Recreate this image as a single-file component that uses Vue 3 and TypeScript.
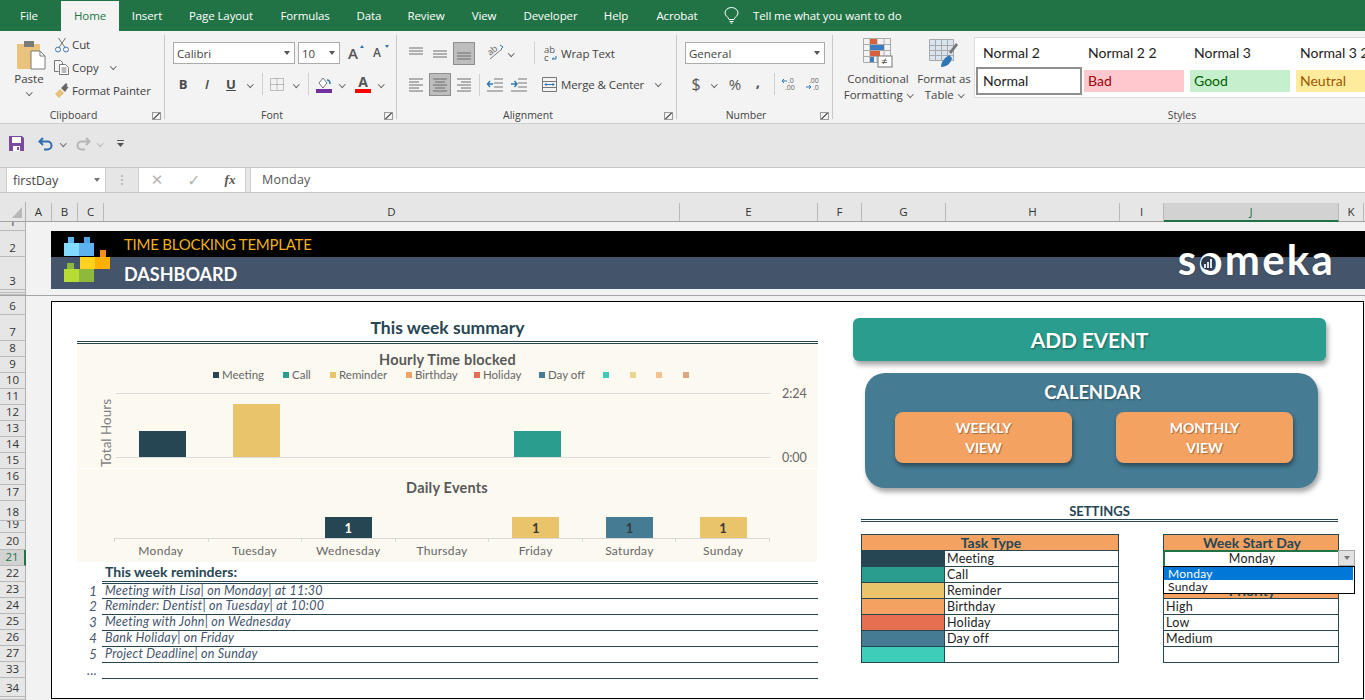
<script setup lang="ts">
interface Row { n: string; h: number; active?: boolean }
interface Bar { day: string; h: number; color: string; label?: string; dark?: boolean }

const tabs: string[] = ['File', 'Home', 'Insert', 'Page Layout', 'Formulas', 'Data', 'Review', 'View', 'Developer', 'Help', 'Acrobat']
const cols: string[] = ['A', 'B', 'C', 'D', 'E', 'F', 'G', 'H', 'I', 'J', 'K']

const frozenRows: Row[] = [
  { n: '1', h: 9 }, { n: '2', h: 26 }, { n: '3', h: 33 }, { n: '4', h: 3 }, { n: '5', h: 2 }
]
const rows: Row[] = [
  { n: '6', h: 19 }, { n: '7', h: 26 }, { n: '8', h: 16 }, { n: '9', h: 16 }, { n: '10', h: 16 },
  { n: '11', h: 16 }, { n: '12', h: 16 }, { n: '13', h: 16 }, { n: '14', h: 16 }, { n: '15', h: 16 },
  { n: '16', h: 16 }, { n: '17', h: 16 }, { n: '18', h: 20 }, { n: '19', h: 12 }, { n: '20', h: 17 },
  { n: '21', h: 16, active: true }, { n: '22', h: 16 }, { n: '23', h: 16 }, { n: '24', h: 16 },
  { n: '25', h: 16 }, { n: '26', h: 16 }, { n: '27', h: 16 }, { n: '33', h: 16 }, { n: '34', h: 19 }, { n: '35', h: 3 }
]

const navy = '#264653'
const green = '#2a9d8f'
const gold = '#e9c46a'
const orange = '#f4a261'
const red = '#e76f51'
const steel = '#457b93'
const mint = '#3ecdb9'

const legend = [
  { name: 'Meeting', color: navy }, { name: 'Call', color: green }, { name: 'Reminder', color: gold },
  { name: 'Birthday', color: orange }, { name: 'Holiday', color: red }, { name: 'Day off', color: steel },
  { name: '', color: mint }, { name: '', color: '#eed58f' }, { name: '', color: '#f6c08f' }, { name: '', color: '#dfa67f' }
]

const hourly: Bar[] = [
  { day: 'Monday', h: 26, color: navy }, { day: 'Tuesday', h: 53, color: gold }, { day: 'Wednesday', h: 0, color: navy },
  { day: 'Thursday', h: 0, color: navy }, { day: 'Friday', h: 26, color: green }, { day: 'Saturday', h: 0, color: navy },
  { day: 'Sunday', h: 0, color: navy }
]
const daily: Bar[] = [
  { day: 'Monday', h: 0, color: navy }, { day: 'Tuesday', h: 0, color: navy },
  { day: 'Wednesday', h: 21, color: navy, label: '1' }, { day: 'Thursday', h: 0, color: navy },
  { day: 'Friday', h: 21, color: gold, label: '1', dark: true }, { day: 'Saturday', h: 21, color: steel, label: '1', dark: true },
  { day: 'Sunday', h: 21, color: gold, label: '1', dark: true }
]
const reminders = [
  { n: '1', t: 'Meeting with Lisa| on Monday| at 11:30' },
  { n: '2', t: 'Reminder: Dentist| on Tuesday| at 10:00' },
  { n: '3', t: 'Meeting with John| on Wednesday' },
  { n: '4', t: 'Bank Holiday| on Friday' },
  { n: '5', t: 'Project Deadline| on Sunday' },
  { n: '...', t: '' }
]
const taskTypes = [
  { c: navy, t: 'Meeting' }, { c: green, t: 'Call' }, { c: gold, t: 'Reminder' }, { c: orange, t: 'Birthday' },
  { c: red, t: 'Holiday' }, { c: steel, t: 'Day off' }, { c: mint, t: '' }
]
const priorities: string[] = ['High', 'Low', 'Medium', '']

const p: Record<string, string> = {
  top: 'M0 2h14M0 5h14M0 8h14',
  mid: 'M0 4h14M0 7h14M0 10h14',
  bot: 'M0 7h14M0 10h14M0 13h14',
  left: 'M0 1h14M0 4h10M0 7h14M0 10h10M0 13h14',
  center: 'M0 1h14M2 4h10M0 7h14M2 10h10M0 13h14',
  right: 'M0 1h14M4 4h10M0 7h14M4 10h10M0 13h14'
}
</script>

<template>
  <div class="app">
    <nav class="tabs">
      <span v-for="t in tabs" :key="t" class="tab" :class="{ home: t === 'Home' }">{{ t }}</span>
      <span class="bulb">
        <svg width="15" height="17" viewBox="0 0 15 17"><path d="M5 12.500C4.500 10 1 9 1 6a6.500 5.500 0 0 1 13 0c0 3-3.500 4-4 6.500zM5.500 14.500h4M6.500 16h2" fill="none" stroke="#fff" /></svg>
      </span>
      <span class="tell">Tell me what you want to do</span>
    </nav>

    <section class="ribbon">
      <div class="group g-clip">
        <div class="body clip">
          <div class="paste">
            <svg width="30" height="30" viewBox="0 0 30 30">
              <rect x="1" y="4" width="23" height="25" rx="1" fill="#e9c27e" />
              <rect x="8" y="1" width="10" height="6" fill="#7a7a7a" />
              <path d="M15 11h9l5 5v13H15z" fill="#fff" stroke="#7b7b7b" />
              <path d="M24 11v5h5" fill="none" stroke="#7b7b7b" />
            </svg>
            <span class="paste-t">Paste</span>
            <i class="chev"></i>
          </div>
          <div class="clip-rows">
            <div class="clip-row">
              <svg width="16" height="16" viewBox="0 0 16 16"><path d="M5 10.500 11.500 1M11 10.500 4.500 1" stroke="#777" fill="none" /><circle cx="4" cy="12.500" r="2.500" fill="none" stroke="#3f78b5" /><circle cx="12" cy="12.500" r="2.500" fill="none" stroke="#3f78b5" /></svg>
              <span>Cut</span>
            </div>
            <div class="clip-row">
              <svg width="16" height="15" viewBox="0 0 16 15"><path d="M.5.500h6l2 2v2M.5.500v11h4" fill="none" stroke="#777" /><path d="M5.500 4.500h6l3 3v7h-9zM7.500 8h5M7.500 10h5M7.500 12h5" fill="#fff" stroke="#777" /></svg>
              <span>Copy</span><i class="chev copy-chev"></i>
            </div>
            <div class="clip-row">
              <svg width="16" height="15" viewBox="0 0 16 15"><path d="M1 11l5-5 4 4-5 5z" fill="#e7c07c" /><path d="M7 5l5-5 1.500 1.500-1 1.500 2 1-3.500 5z" fill="#666" /></svg>
              <span>Format Painter</span>
            </div>
          </div>
        </div>
        <div class="glabel">Clipboard<i class="launch"></i></div>
      </div>

      <div class="group g-font">
        <div class="body two">
          <div class="font-r1">
            <div class="combo font-name">Calibri<i class="caret"></i></div>
            <div class="combo font-size">10<i class="caret"></i></div>
            <span class="grow">A<i class="up"></i></span>
            <span class="grow small">A<i class="dn"></i></span>
          </div>
          <div class="font-r2">
            <b class="fmt">B</b><i class="fmt it">I</i><u class="fmt und">U</u><i class="chev"></i>
            <i class="sep"></i>
            <svg width="14" height="13" viewBox="0 0 14 13"><path d="M.5.500h13v12H.5zM7 .5v12M.5 6.500h13" fill="none" stroke="#888" stroke-dasharray="1 1" /></svg>
            <i class="chev"></i>
            <i class="sep"></i>
            <svg width="16" height="17" viewBox="0 0 16 17"><path d="M3 7l4-5 4 5-4 5z" fill="#fff" stroke="#777" /><path d="M11 4c2 0 3 2 3 4" fill="none" stroke="#2f76b5" stroke-width="1.500" /><rect y="13" width="16" height="4" fill="#7030a0" /></svg>
            <i class="chev"></i>
            <span class="color-a">A</span>
            <i class="chev"></i>
          </div>
        </div>
        <div class="glabel">Font<i class="launch"></i></div>
      </div>

      <div class="group g-align">
        <div class="body align-grid">
          <svg class="ic" viewBox="0 0 14 14"><path :d="p.top" /></svg>
          <svg class="ic low" viewBox="0 0 14 14"><path :d="p.mid" /></svg>
          <span class="toggle"><svg class="ic" viewBox="0 0 14 14"><path :d="p.bot" /></svg></span>
          <i></i>
          <span class="orient">
            <svg width="17" height="16" viewBox="0 0 17 16"><path d="M3 15 15 5" fill="none" stroke="#777" /><text x="1" y="10" font-size="9" fill="#666" font-family="Open Sans" transform="rotate(-40 5 8)">ab</text><path d="M13 1l3 2-2 2" fill="none" stroke="#2f76b5" /></svg>
          </span>
          <i class="chev orient-chev"></i>
          <i class="sep tall"></i>
          <span class="wide-tool">
            <svg class="w-ic" width="14" height="17" viewBox="0 0 14 17"><text x="0" y="8" font-size="9.500" fill="#555" font-family="Open Sans">ab</text><text x="0" y="16" font-size="9.500" fill="#555" font-family="Open Sans">c</text><path d="M12 11v3H8l2-1.500" fill="none" stroke="#2f76b5" /></svg>
            <span>Wrap Text</span>
          </span>

          <svg class="ic" viewBox="0 0 14 14"><path :d="p.left" /></svg>
          <span class="toggle"><svg class="ic" viewBox="0 0 14 14"><path :d="p.center" /></svg></span>
          <svg class="ic" viewBox="0 0 14 14"><path :d="p.right" /></svg>
          <i class="sep"></i>
          <svg width="16" height="14" viewBox="0 0 16 14"><path d="M7 1h9M7 5h9M7 9h9M0 13h16" stroke="#777" fill="none" /><path d="M0 6h6M3 3 .5 6 3 9" stroke="#2f76b5" fill="none" stroke-width="1.400" /></svg>
          <svg width="16" height="14" viewBox="0 0 16 14"><path d="M7 1h9M7 5h9M7 9h9M0 13h16" stroke="#777" fill="none" /><path d="M0 6h6M3.500 3 6 6 3.500 9" stroke="#2f76b5" fill="none" stroke-width="1.400" /></svg>
          <span></span>
          <span class="wide-tool">
            <svg class="w-ic m" width="15" height="15" viewBox="0 0 15 15"><path d="M.5.500h14v14H.5zM.5 4.500h14M.5 10.500h14" fill="none" stroke="#777" /><path d="M3 7.500h9M4.500 6 3 7.500 4.500 9M10.500 6 12 7.500 10.500 9" fill="none" stroke="#2f76b5" /></svg>
            <span>Merge &amp; Center</span><i class="chev merge-chev"></i>
          </span>
        </div>
        <div class="glabel">Alignment<i class="launch"></i></div>
      </div>

      <div class="group g-num">
        <div class="body two">
          <div class="combo num-combo">General<i class="caret"></i></div>
          <div class="num-r2">
            <span class="nsym dollar">$</span><i class="chev"></i>
            <span class="nsym">%</span><span class="nsym comma">,</span>
            <i class="sep"></i>
            <svg width="15" height="14" viewBox="0 0 15 14"><text x="6" y="6" font-size="7" fill="#666" font-family="Open Sans">.0</text><text x="3" y="13" font-size="7" fill="#666" font-family="Open Sans">.00</text><path d="M0 4h5M2 2 0 4l2 2" stroke="#2f76b5" fill="none" /></svg>
            <span></span>
            <svg width="15" height="14" viewBox="0 0 15 14"><text x="3" y="6" font-size="7" fill="#666" font-family="Open Sans">.00</text><text x="7" y="13" font-size="7" fill="#666" font-family="Open Sans">.0</text><path d="M0 10h5M3 8l2 2-2 2" stroke="#2f76b5" fill="none" /></svg>
          </div>
        </div>
        <div class="glabel">Number<i class="launch"></i></div>
      </div>

      <div class="group g-styles">
        <div class="body styles-body">
          <div class="big cf">
            <svg width="30" height="30" viewBox="0 0 30 30">
              <path d="M.5.500h27v24H.5zM.5 6.500h27M.5 12.500h27M.5 18.500h27M7 .5v24M14 .5v24M21 .5v24" fill="none" stroke="#a9a9a9" />
              <rect x="7" y="1" width="7" height="5" fill="#d9603b" /><rect x="7" y="7" width="14" height="5" fill="#3f7cbf" />
              <rect x="7" y="13" width="10" height="5" fill="#d9603b" /><rect x="7" y="19" width="4" height="5" fill="#3f7cbf" />
              <rect x="15" y="18" width="14" height="11" fill="#fff" stroke="#777" />
              <text x="18" y="27" font-size="11" fill="#444" font-family="Open Sans">≠</text>
            </svg>
            <span class="big-t">Conditional</span>
            <span class="big-t">Formatting<i class="chev big-chev"></i></span>
          </div>
          <div class="big">
            <svg width="30" height="30" viewBox="0 0 30 30">
              <path d="M.5 1.500h24v21H.5zM.5 7.500h24M.5 12.500h24M.5 17.500h24M6.500 1.500v21M12.500 1.500v21M18.500 1.500v21" fill="#d9e4f1" stroke="#a9a9a9" />
              <path d="M20 14 27 5l2 2-7 9z" fill="#777" /><path d="M12 29c0-6 4-9 8-12l3 3c-1 5-5 9-11 9z" fill="#2f76b5" />
            </svg>
            <span class="big-t">Format as</span>
            <span class="big-t">Table<i class="chev big-chev"></i></span>
          </div>
          <div class="gallery">
            <span class="g-name">Normal 2</span><span class="g-name">Normal 2 2</span><span class="g-name">Normal 3</span><span class="g-name">Normal 3 2</span>
            <span class="g-cell normal">Normal</span><span class="g-cell bad">Bad</span><span class="g-cell good">Good</span><span class="g-cell neutral">Neutral</span>
          </div>
        </div>
        <div class="glabel styles-label">Styles</div>
      </div>
    </section>

    <div class="qat">
      <svg width="15" height="15" viewBox="0 0 15 15"><path d="M0 0h13l2 2v13H0z" fill="#7a4a9c" /><rect x="3" y="1" width="9" height="6" fill="#fff" /><rect x="4" y="10" width="7" height="5" fill="#fff" /><rect x="8" y="11" width="2" height="3" fill="#7a4a9c" /></svg>
      <svg class="undo" width="15" height="14" viewBox="0 0 15 14"><path d="M5 1 1.500 4.500 5 8M2 4.500h7.500a4 4 0 0 1 0 8H6" fill="none" stroke="#2f6fae" stroke-width="2" /></svg>
      <i class="chev q1"></i>
      <svg class="redo" width="15" height="14" viewBox="0 0 15 14"><path d="M10 1l3.500 3.500L10 8M13 4.500H5.500a4 4 0 0 0 0 8H9" fill="none" stroke="#b5b5b5" stroke-width="2" /></svg>
      <i class="chev q2"></i>
      <svg class="custom" width="7" height="7" viewBox="0 0 7 7"><path d="M0 0h7v1H0zM0 3h7L3.500 7z" fill="#555" /></svg>
    </div>

    <div class="fbar">
      <div class="namebox">firstDay<i class="caret dark"></i></div>
      <i class="dots"></i>
      <div class="fx-box"><span class="fx-x">✕</span><span class="fx-c">✓</span><span class="fx-f">fx</span></div>
      <div class="finput">Monday</div>
    </div>

    <div class="colhead">
      <div class="corner"><i class="tri"></i></div>
      <div v-for="c in cols" :key="c" class="col" :class="{ on: c === 'J' }">{{ c }}</div>
    </div>

    <div class="pane frozen">
      <div class="rowhead">
        <div v-for="r in frozenRows" :key="r.n" class="rh" :style="{ height: r.h + 'px' }">{{ r.n }}</div>
      </div>
      <header class="band">
        <div class="band-top">TIME BLOCKING TEMPLATE</div>
        <div class="band-bot">DASHBOARD</div>
        <svg class="logo" width="46" height="45" viewBox="0 0 46 45">
          <rect x="4" y="0" width="6" height="6" fill="#5cb8f0" /><rect x="20" y="0" width="6" height="6" fill="#4ea5e6" />
          <rect x="0" y="6" width="15" height="13" fill="#83dcff" /><rect x="15" y="6" width="15" height="13" fill="#5cb3f0" />
          <rect x="36" y="13" width="6" height="7" fill="#f28c1e" />
          <rect x="16" y="20" width="15" height="12" fill="#ffd21f" /><rect x="31" y="20" width="15" height="12" fill="#ffb000" />
          <rect x="3" y="26" width="7" height="6" fill="#8fb93c" />
          <rect x="0" y="32" width="15" height="13" fill="#b7dd35" /><rect x="15" y="32" width="15" height="13" fill="#8fb93c" />
        </svg>
        <div class="brand">someka
          <span class="brand-o"><svg width="10" height="9" viewBox="0 0 10 9"><path d="M1 5h2v4H1zM4 3h2v6H4zM7 0h2v9H7z" fill="#dfe5ec" /></svg></span>
        </div>
      </header>
    </div>

    <div class="pane">
      <div class="rowhead">
        <div v-for="r in rows" :key="r.n" class="rh" :class="{ on: r.active }" :style="{ height: r.h + 'px' }">{{ r.n }}</div>
      </div>
      <main class="board">
        <section class="left">
          <h2 class="summary">This week summary</h2>
          <div class="chart c1">
            <h3 class="ct">Hourly Time blocked</h3>
            <div class="legend">
              <span v-for="(l, i) in legend" :key="i" class="li"><i class="sw" :style="{ background: l.color }"></i>{{ l.name }}</span>
            </div>
            <div class="plot-wrap">
              <div class="ylabel">Total Hours</div>
              <div class="plot days">
                <div v-for="b in hourly" :key="b.day" class="cell">
                  <div v-if="b.h" class="bar" :style="{ height: b.h + 'px', background: b.color }"></div>
                </div>
              </div>
              <div class="yticks"><span>2:24</span><span>0:00</span></div>
            </div>
          </div>
          <div class="chart c2">
            <h3 class="ct">Daily Events</h3>
            <div class="plot2 days">
              <div v-for="b in daily" :key="b.day" class="cell">
                <div v-if="b.h" class="bar num" :class="{ dark: b.dark }" :style="{ height: b.h + 'px', background: b.color }">{{ b.label }}</div>
              </div>
            </div>
            <div class="ticks days"><i v-for="b in daily" :key="b.day"></i></div>
            <div class="labels days"><span v-for="b in daily" :key="b.day">{{ b.day }}</span></div>
          </div>
          <h3 class="rem-title">This week reminders:</h3>
          <div class="rem-list">
            <div v-for="r in reminders" :key="r.n" class="rem">
              <span class="rem-n">{{ r.n }}</span><span class="rem-t">{{ r.t }}</span>
            </div>
          </div>
        </section>

        <section class="right">
          <div class="add">ADD EVENT</div>
          <div class="calendar">
            <div class="cal-t">CALENDAR</div>
            <div class="views">
              <div class="view">WEEKLY<br />VIEW</div>
              <div class="view">MONTHLY<br />VIEW</div>
            </div>
          </div>
          <div class="settings">SETTINGS</div>
          <div class="tables">
            <table class="tbl t-left">
              <colgroup><col class="col-sw" /><col /></colgroup>
              <thead><tr><th colspan="2">Task Type</th></tr></thead>
              <tbody>
                <tr v-for="t in taskTypes" :key="t.c">
                  <td :style="{ background: t.c }"></td><td>{{ t.t }}</td>
                </tr>
              </tbody>
            </table>
            <div class="t-wrap">
              <table class="tbl t-right">
                <thead><tr><th>Week Start Day</th></tr></thead>
                <tbody>
                  <tr><td class="selcell">Monday</td></tr>
                  <tr><td></td></tr>
                  <tr><th>Priority</th></tr>
                  <tr v-for="(pr, i) in priorities" :key="i"><td>{{ pr }}</td></tr>
                </tbody>
              </table>
              <span class="dd-btn"><i class="caret dark"></i></span>
              <div class="dropdown">
                <div class="opt sel">Monday</div>
                <div class="opt">Sunday</div>
              </div>
            </div>
          </div>
        </section>
      </main>
    </div>
  </div>
</template>

<style>
html, body { margin: 0; padding: 0; background: #f2f2f2; }
</style>

<style scoped>
.app { width: 1365px; height: 700px; overflow: hidden; display: flex; flex-direction: column; background: #f2f2f2; font-family: "Open Sans", "Noto Sans", sans-serif; color: #444; }
i { font-style: normal; }
svg { overflow: visible; }
.tabs { height: 31px; flex: none; background: #217346; color: #fff; font-size: 11.5px; display: grid; grid-template-columns: 58px 61px 56px 92px 76px 52px 62px 54px 79px 52px 70px 41px auto; align-items: center; }
.tab { text-align: center; letter-spacing: -.1px; }
.tab.home { background: #f3f3f3; color: #217346; margin: 1px 0 0 3px; height: 30px; line-height: 30px; }
.bulb { display: flex; justify-content: center; padding-right: 1px; }
.bulb svg { margin-left: -1px; }
.tell { letter-spacing: -.1px; }

.ribbon { height: 88px; padding-top: 4px; flex: none; box-sizing: content-box; background: #f3f3f3; border-bottom: 1px solid #cfcfcf; display: flex; font-size: 11.5px; color: #3f3f3f; }
.group { height: 84px; display: flex; flex-direction: column; position: relative; box-sizing: border-box; border-right: 1px solid #c9c9c9; flex: none; }
.g-clip { width: 165px; }
.g-font { width: 232px; }
.g-align { width: 280px; }
.g-num { width: 156px; }
.g-styles { flex: 1; border-right: 0; min-width: 0; }
.body { height: 73px; flex: none; box-sizing: border-box; }
.glabel { height: 14px; line-height: 14px; text-align: center; font-size: 10.500px; color: #444; flex: none; padding-right: 17px; }
.launch { position: absolute; right: 3px; bottom: -1px; width: 7px; height: 6px; border: 1px solid #9a9a9a; background: linear-gradient(135deg, transparent 45%, #666 45%, #666 60%, transparent 60%); }
.chev { display: block; width: 3.500px; height: 3.500px; border-right: 1px solid #666; border-bottom: 1px solid #666; transform: rotate(45deg); }
.caret { display: block; width: 0; height: 0; border: 3.500px solid transparent; border-top: 4px solid #555; border-bottom: 0; }
.caret.dark { border-top-color: #777; }
.sep { display: block; width: 1px; height: 22px; background: #d0d0d0; }
.clip { display: flex; padding: 5px 0 0 14px; }
.paste { width: 30px; display: flex; flex-direction: column; align-items: center; }
.paste svg { margin-left: 4px; }
.paste-t { margin-top: 1px; line-height: 16px; }
.paste .chev { margin-top: 3px; }
.clip-rows { margin: -7px 0 0 10px; display: grid; grid-auto-rows: 23px; }
.clip-row { display: flex; align-items: center; gap: 2px; white-space: nowrap; letter-spacing: -.1px; }
.copy-chev { margin-left: 10px; margin-top: -2px; }
.two { padding: 7px 0 0 8px; display: grid; grid-template-rows: 22px 22px; row-gap: 9px; }
.combo { background: #fff; border: 1px solid #ababab; box-sizing: border-box; height: 22px; display: flex; align-items: center; justify-content: space-between; padding: 0 4px 0 3px; font-size: 11.500px; }
.font-r1 { display: flex; align-items: center; }
.font-name { width: 122px; }
.font-size { width: 42px; margin-left: 3px; }
.grow { position: relative; margin-left: 8px; width: 16px; font-size: 15px; line-height: 22px; font-weight: 600; color: #555; }
.grow.small { margin-left: 9px; font-size: 12px; }
.up, .dn { position: absolute; top: 3px; right: 0; width: 0; height: 0; border: 2.500px solid transparent; }
.up { border-bottom: 3px solid #2f76b5; border-top: 0; }
.dn { border-top: 3px solid #2f76b5; border-bottom: 0; }
.font-r2 { display: grid; grid-template-columns: 20px 28px 20px 18px 6px 24px 14px 10px 22px 14px 28px 8px; justify-items: center; align-items: center; }
.fmt { font-size: 13px; color: #4a4a4a; font-family: "Open Sans", sans-serif; line-height: 22px; }
.it { font-style: italic; font-weight: 600; }
.und { font-weight: 700; }
.color-a { width: 16px; line-height: 14px; text-align: center; font-weight: 700; font-size: 14px; border-bottom: 4px solid #f00; color: #555; box-sizing: border-box; height: 18px; }
.align-grid { padding: 7px 0 0 8px; display: grid; grid-template-columns: 22px 26px 22px 8px 24px 24px 6px auto; grid-template-rows: 22px 23px; row-gap: 9px; justify-items: center; align-items: center; }
.ic { width: 14px; height: 14px; fill: none; stroke: #6e6e6e; }
.ic.low { margin-top: 1px; }
.toggle { width: 22px; height: 23px; background: #bdbdbd; border: 1px solid #8d8d8d; box-sizing: border-box; display: flex; align-items: center; justify-content: center; }
.orient { justify-self: start; margin-left: 4px; }
.orient-chev { justify-self: start; margin-left: 2px; }
.sep.tall { height: 22px; }
.wide-tool { justify-self: start; display: flex; align-items: center; white-space: nowrap; margin-left: 5px; letter-spacing: -.1px; }
.w-ic { margin: 0 3px 0 2px; }
.w-ic.m { margin: 0 4px 0 0; }
.merge-chev { margin: -2px 0 0 12px; }
.num-combo { width: 140px; }
.num-r2 { display: grid; grid-template-columns: 22px 14px 28px 18px 15px 15px 9px 15px; justify-items: center; align-items: center; }
.nsym { font-size: 15px; line-height: 22px; color: #555; }
.dollar { font-size: 16px; }
.comma { font-weight: 700; margin-top: -6px; }
.styles-body { display: flex; padding-left: 8px; }
.big { width: 74px; display: flex; flex-direction: column; align-items: center; padding-top: 3px; font-size: 11.500px; color: #444; flex: none; }
.big + .big { width: 58px; }
.big svg { margin-bottom: 3px; flex: none; }
.big-t { line-height: 16px; white-space: nowrap; display: flex; align-items: center; }
.big-chev { margin: -2px 0 0 5px; }
.gallery { margin: 2px 0 0 1px; flex: 1; min-width: 0; height: 61px; background: #fff; border: 1px solid #dcdcdc; border-right: 0; box-sizing: border-box; display: grid; grid-template-columns: 108px 106px 106px 1fr; grid-template-rows: 29px 28px; font-family: Lato, sans-serif; font-size: 14px; color: #222; padding-left: 1px; overflow: hidden; }
.g-name { padding-left: 7px; line-height: 30px; white-space: nowrap; }
.g-name + .g-name { padding-left: 4px; }
.g-cell { display: block; width: 100px; height: 22px; line-height: 21px; padding-left: 4px; box-sizing: border-box; margin-top: 3px; }
.normal { width: 106px; height: 28px; margin: 0; line-height: 24px; padding-left: 5px; border: 2px solid #8f8f8f; background: #fff; }
.bad { background: #ffc7ce; color: #9c0006; }
.good { background: #c6efce; color: #006100; }
.neutral { background: #ffeb9c; color: #9c5700; }
.styles-label { padding: 0 0 0 166px; }

.qat { height: 43px; flex: none; background: #e6e6e6; display: flex; align-items: center; padding: 0 0 4px 9px; box-sizing: border-box; }
.undo { margin-left: 14px; }
.q1 { margin-left: 8px; }
.redo { margin-left: 10px; }
.q2 { margin-left: 7px; border-color: #b5b5b5; }
.custom { margin-left: 15px; }

.fbar { height: 26px; flex: none; background: #e6e6e6; display: flex; padding-left: 6px; box-sizing: border-box; border-top: 1px solid #c6c6c6; border-bottom: 1px solid #c6c6c6; }
.namebox { width: 100px; background: #fff; border-right: 1px solid #cdcdcd; border-left: 1px solid #cdcdcd; box-sizing: border-box; display: flex; align-items: center; justify-content: space-between; padding: 0 5px 0 6px; font-size: 12.500px; }
.dots { width: 2px; margin: 7px 0 7px 15px; background: repeating-linear-gradient(#bdbdbd 0 2px, transparent 2px 4px); }
.fx-box { width: 108px; margin-left: 15px; background: #fff; border-left: 1px solid #cdcdcd; border-right: 1px solid #cdcdcd; box-sizing: border-box; display: grid; grid-template-columns: 36px 38px 34px; align-items: center; justify-items: center; }
.fx-x { color: #b5b5b5; font-size: 15px; font-family: "DejaVu Sans", sans-serif; }
.fx-c { color: #b5b5b5; font-size: 16px; font-family: "DejaVu Sans", sans-serif; font-weight: 700; }
.fx-f { font-family: "Liberation Serif", serif; font-style: italic; font-weight: 700; font-size: 13px; color: #555; }
.finput { flex: 1; margin-left: 4px; background: #fff; border-left: 1px solid #cdcdcd; padding-left: 11px; line-height: 24px; font-size: 12.500px; color: #555; letter-spacing: .2px; }

.colhead { height: 29px; flex: none; background: #e6e6e6; display: grid; grid-template-columns: 26px 26px 26px 26px 576px 138px 44px 84px 174px 44px 175px 25px 1fr; align-items: end; border-bottom: 1px solid #a2a2a2; box-sizing: border-box; }
.corner { height: 19px; border-right: 1px solid #b0b0b0; position: relative; }
.tri { position: absolute; right: 3px; bottom: 3px; width: 10px; height: 11px; background: #b8b8b8; clip-path: polygon(100% 0, 100% 100%, 0 100%); }
.col { height: 18px; line-height: 18px; text-align: center; font-size: 11.500px; color: #333; border-right: 1px solid #b9b9b9; box-sizing: border-box; }
.col.on { background: #d2d2d2; color: #217346; height: 19px; border-bottom: 2px solid #217346; margin-bottom: -1px; position: relative; }

.pane { display: flex; flex: none; }
.frozen { height: 74px; border-bottom: 1px solid #a6a6a6; box-sizing: border-box; overflow: hidden; }
.rowhead { width: 26px; flex: none; background: #e6e6e6; border-right: 1px solid #b0b0b0; box-sizing: border-box; }
.rh { box-sizing: border-box; border-bottom: 1px solid #b9b9b9; font-size: 11.500px; line-height: 16px; color: #333; text-align: center; overflow: hidden; display: flex; align-items: flex-end; justify-content: center; }
.rh.on { background: #d2d2d2; color: #217346; border-right: 2px solid #217346; margin-right: -1px; }
.band { position: relative; margin: 9px 0 0 25px; flex: 1; height: 58px; }
.band-top { height: 26px; background: #000; color: #eeb020; font-family: Lato, sans-serif; font-size: 15px; letter-spacing: -.25px; line-height: 26px; padding-left: 73px; }
.band-bot { height: 32px; background: #44546a; color: #fff; font-family: Lato, sans-serif; font-weight: 700; font-size: 18px; line-height: 34px; padding-left: 73px; }
.logo { position: absolute; left: 13px; top: 6px; }
.brand { position: absolute; right: 30px; top: 3px; color: #fff; font-family: Lato, sans-serif; font-weight: 700; font-size: 42px; line-height: 50px; letter-spacing: 2.200px; text-shadow: 0 0 2px rgba(0, 0, 0, .4); }
.brand-o { position: absolute; left: 23px; top: 22px; width: 14px; height: 14px; background: #2f3a4b; border-radius: 50%; display: flex; align-items: center; justify-content: center; }

.board { flex: 1; height: 398px; margin: 5px 1px 0 25px; box-sizing: border-box; background: #fff; border: 1px solid #000; display: flex; }
.left { width: 741px; margin-left: 25px; flex: none; }
.summary { margin: 0; height: 42px; box-sizing: border-box; padding-top: 15px; text-align: center; font-family: Lato, sans-serif; font-size: 17.500px; line-height: 22px; font-weight: 700; color: #264653; border-bottom: 3px double #264653; }
.chart { background: #fcf9f1; font-family: Lato, sans-serif; color: #595959; }
.c1 { height: 124px; padding-top: 7px; box-sizing: border-box; }
.c2 { height: 93px; margin: 1px 1px 0 0; padding-top: 10px; box-sizing: border-box; }
.ct { margin: 0; text-align: center; font-size: 14.500px; line-height: 18px; font-weight: 700; color: #595959; letter-spacing: .2px; }
.legend { height: 12px; display: grid; grid-template-columns: 70px 47px 76px 68px 65px 64px 27px 26px 27px 20px; padding-left: 136px; font-size: 11.500px; line-height: 12px; color: #666; }
.li { display: flex; align-items: center; white-space: nowrap; }
.sw { width: 6px; height: 6px; margin-right: 3px; flex: none; }
.plot-wrap { margin-top: 12px; display: grid; grid-template-columns: 39px 655px 47px; }
.ylabel { writing-mode: vertical-rl; transform: rotate(180deg); font-size: 13.500px; line-height: 16px; color: #7f7f7f; justify-self: end; align-self: end; margin: 0 2px -9px 0; white-space: nowrap; }
.days { display: grid; grid-template-columns: repeat(7, 1fr); }
.plot { height: 65px; box-sizing: border-box; border-top: 1px solid #dcdcdc; border-bottom: 1px solid #dcdcdc; }
.cell { display: flex; align-items: flex-end; justify-content: center; }
.bar { width: 47px; }
.yticks { display: flex; flex-direction: column; justify-content: space-between; margin: -6px 0 -7px; padding-left: 11px; font-size: 12.500px; line-height: 14px; color: #666; }
.plot2 { margin: 20px 47px 0 37px; height: 22px; box-sizing: border-box; border-bottom: 1px solid #d9d9d9; }
.num { text-align: center; color: #fff; font-weight: 700; font-size: 13px; line-height: 22px; }
.num.dark { color: #3a3a3a; }
.ticks { margin: 0 47px 0 37px; height: 3px; border-right: 1px solid #d9d9d9; }
.ticks i { display: block; border-left: 1px solid #d9d9d9; }
.labels { margin: 2px 47px 0 37px; text-align: center; font-size: 12px; line-height: 14px; letter-spacing: .3px; color: #666; }
.rem-title { margin: 0 0 0 28px; height: 19px; font-family: Lato, sans-serif; font-size: 14px; line-height: 19px; font-weight: 700; color: #264653; }
.rem-list { border-top: 3px double #264653; margin-left: 25px; }
.rem { height: 16px; box-sizing: border-box; border-bottom: 1px solid #264653; display: flex; font-family: Lato, sans-serif; font-style: italic; font-size: 12.500px; line-height: 14px; color: #44546a; letter-spacing: .25px; white-space: nowrap; }
.rem:first-child { height: 15px; }
.rem-n { position: relative; width: 0; left: -5px; display: flex; justify-content: flex-end; font-size: 13px; }
.rem-t { padding-left: 3px; }
.right { width: 486px; margin-left: 35px; padding-top: 16px; flex: none; font-family: Lato, sans-serif; }
.add { width: 473px; height: 43px; box-sizing: border-box; background: #2a9d8f; border-radius: 6px; box-shadow: 2px 4px 5px rgba(0, 0, 0, .35); color: #fff; text-align: center; font-weight: 700; font-size: 21px; letter-spacing: -.2px; line-height: 43px; text-shadow: 1px 1px 2px rgba(0, 0, 0, .4); }
.calendar { margin: 12px 0 0 12px; width: 453px; height: 115px; box-sizing: border-box; border-radius: 20px; background: #457b93; padding: 8px 25px 0 30px; box-shadow: 2px 4px 5px rgba(0, 0, 0, .35); }
.cal-t { text-align: center; color: #fff; font-weight: 700; font-size: 18.500px; letter-spacing: -.2px; line-height: 22px; text-shadow: 1px 1px 2px rgba(0, 0, 0, .35); padding-right: 3px; }
.views { margin-top: 9px; display: flex; justify-content: space-between; }
.view { width: 177px; height: 51px; box-sizing: border-box; padding-top: 6px; border-radius: 8px; background: #f4a261; color: #fff; text-align: center; font-weight: 700; font-size: 14px; line-height: 20px; box-shadow: 1px 3px 4px rgba(0, 0, 0, .4); text-shadow: 1px 1px 1px rgba(0, 0, 0, .35); }
.settings { margin: 15px 0 0 8px; width: 477px; height: 19px; box-sizing: border-box; text-align: center; font-weight: 700; font-size: 13px; line-height: 16px; color: #264653; border-bottom: 3px double #264653; }
.tables { margin: 12px 0 0 8px; width: 478px; display: flex; justify-content: space-between; align-items: flex-start; }
.tbl { border-collapse: collapse; table-layout: fixed; font-size: 12.500px; color: #222; letter-spacing: .25px; }
.tbl th, .tbl td { height: 16px; padding: 0 0 0 2px; box-sizing: border-box; border: 1px solid #264653; line-height: 14px; white-space: nowrap; overflow: hidden; }
.tbl th { background: #f4a261; color: #264653; font-weight: 700; font-size: 14px; letter-spacing: 0; text-align: center; }
.t-left { width: 258px; }
.col-sw { width: 83px; }
.t-wrap { position: relative; width: 176px; }
.t-right { width: 176px; }
.selcell { text-align: center; outline: 2px solid #217346; outline-offset: -1px; }
.dd-btn { position: absolute; left: 175px; top: 16px; width: 17px; height: 16px; box-sizing: border-box; background: #e1e1e1; border: 1px solid #a8a8a8; display: flex; align-items: center; justify-content: center; }
.dropdown { position: absolute; left: 0; top: 32px; width: 192px; height: 28px; box-sizing: border-box; background: #fff; border: 1px solid #000; font-size: 12px; color: #222; letter-spacing: .25px; }
.opt { height: 13px; line-height: 13px; padding-left: 4px; }
.opt.sel { background: #0078d7; color: #fff; margin-right: 1px; }
</style>
